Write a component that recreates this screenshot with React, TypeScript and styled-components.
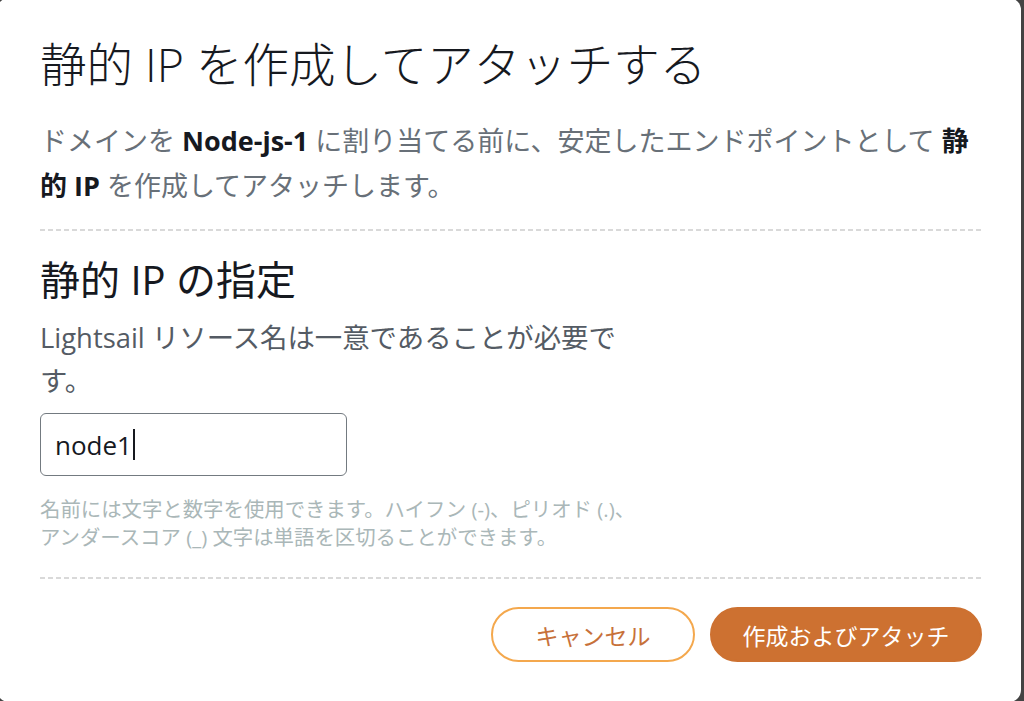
import React from 'react'
import styled, { createGlobalStyle } from 'styled-components'

const GlobalStyle = createGlobalStyle`
  html, body {
    margin: 0;
    padding: 0;
    background: #434343;
    overflow: hidden;
  }
  body {
    font-family: 'Open Sans', 'Noto Sans CJK JP', sans-serif;
  }
`

const Page = styled.div`
  width: 1024px;
  height: 701px;
  overflow: hidden;
`

const Card = styled.div`
  box-sizing: border-box;
  width: 1024px;
  height: 704px;
  margin: -2px 0 0 -3px;
  padding: 36px 39px 0 43px;
  background: #ffffff;
  border-radius: 12px;
  display: flex;
  flex-direction: column;
`

const Title = styled.h1`
  margin: 0;
  font-size: 46.5px;
  line-height: 60px;
  font-weight: 300;
  color: #16191f;
`

const Description = styled.p`
  margin: 24px 0 0;
  font-size: 27px;
  line-height: 45px;
  color: #687078;
  font-weight: 400;
`

const Strong = styled.b`
  color: #16191f;
  font-weight: 700;
`

const Divider = styled.div<{ $gap: number }>`
  height: 2px;
  margin-top: ${p => p.$gap}px;
  background-image: linear-gradient(to right, #d9d9d9 0 5px, transparent 5px 8px);
  background-size: 8px 2px;
  background-repeat: repeat-x;
`

const SectionTitle = styled.h2`
  margin: 23px 0 0;
  font-size: 40px;
  line-height: 52px;
  font-weight: 400;
  color: #16191f;
`

const Hint = styled.p`
  margin: 10px 0 0;
  max-width: 615px;
  font-size: 27.4px;
  line-height: 43px;
  color: #545b64;
`

const InputBox = styled.div`
  box-sizing: border-box;
  margin-top: 11px;
  width: 307px;
  height: 63px;
  border: 1.5px solid #737a80;
  border-radius: 6px;
  display: flex;
  align-items: center;
  padding-left: 14px;
  font-size: 26px;
  color: #16191f;
`

const Caret = styled.span`
  display: inline-block;
  width: 2px;
  height: 31px;
  margin-left: 1px;
  background: #16191f;
`

const Help = styled.p`
  margin: 19px 0 0;
  max-width: 600px;
  font-size: 20.4px;
  line-height: 28px;
  color: #aab7b8;
`

const Footer = styled.div`
  display: flex;
  justify-content: flex-end;
  gap: 15px;
  margin-top: 28px;
`

const Button = styled.button<{ $primary?: boolean }>`
  box-sizing: border-box;
  height: 55px;
  padding: 0 ${p => (p.$primary ? 28 : 36)}px;
  min-width: ${p => (p.$primary ? 272 : 204)}px;
  border-radius: 28px;
  font-family: 'Open Sans', 'Noto Sans CJK JP', sans-serif;
  font-size: 23px;
  font-weight: 400;
  cursor: pointer;
  border: 2px solid ${p => (p.$primary ? '#cd7131' : '#f4a84d')};
  background: ${p => (p.$primary ? '#cd7131' : '#ffffff')};
  color: ${p => (p.$primary ? '#ffffff' : '#c7713a')};
`

export default function App() {
  return (
    <Page>
      <GlobalStyle />
      <Card>
        <Title>静的 IP を作成してアタッチする</Title>
        <Description>
          ドメインを <Strong>Node-js-1</Strong> に割り当てる前に、安定したエンドポイントとして{' '}
          <Strong>静的 IP</Strong> を作成してアタッチします。
        </Description>
        <Divider $gap={21} />
        <SectionTitle>静的 IP の指定</SectionTitle>
        <Hint>Lightsail リソース名は一意であることが必要です。</Hint>
        <InputBox>
          node1
          <Caret />
        </InputBox>
        <Help>
          名前には文字と数字を使用できます。ハイフン (-)、ピリオド (.)、アンダースコア (_) 文字は単語を区切ることができます。
        </Help>
        <Divider $gap={26} />
        <Footer>
          <Button>キャンセル</Button>
          <Button $primary>作成およびアタッチ</Button>
        </Footer>
      </Card>
    </Page>
  )
}
